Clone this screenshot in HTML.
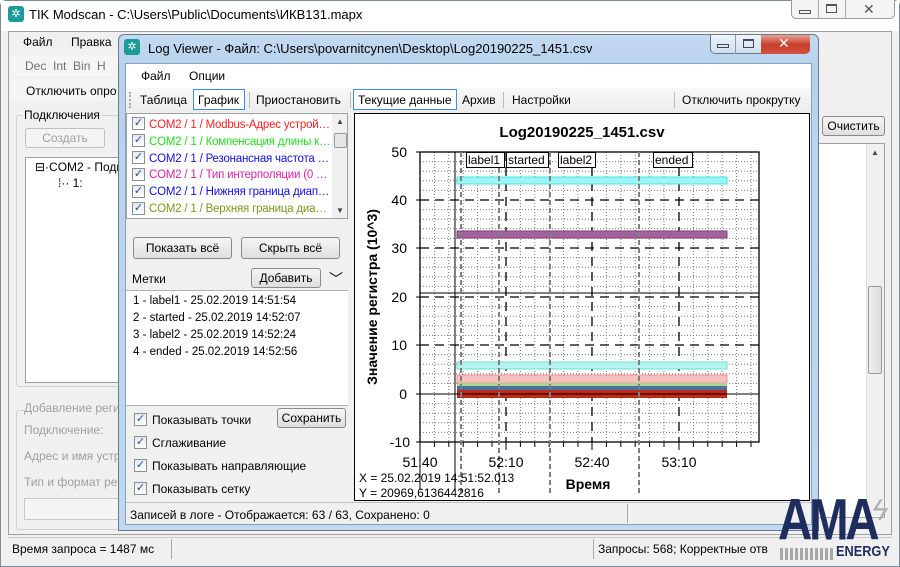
<!DOCTYPE html>
<html><head><meta charset="utf-8"><style>
*{margin:0;padding:0;box-sizing:border-box}
body{width:900px;height:567px;position:relative;overflow:hidden;background:#fff;font-family:"Liberation Sans","DejaVu Sans",sans-serif;font-size:12px;color:#000}
.a{position:absolute;white-space:nowrap}
.btn{position:absolute;border:1px solid #8a8a8a;border-radius:3px;background:linear-gradient(#f6f6f6,#dedede);text-align:center;font-size:12px}
.cb{position:absolute;width:13px;height:13px;border:1px solid #8f8f8f;background:linear-gradient(#e4eaf2,#fff);font-size:11px;line-height:11px;text-align:center;color:#2a4a8a;font-weight:bold}
.gray{color:#a0a0a0}
.ser div{width:182px;overflow:hidden;text-overflow:ellipsis;letter-spacing:-0.2px}
</style></head><body>
<div class="a" style="left:0;top:0;width:900px;height:567px;border:1px solid #7a8a9a;background:#f0f0f0;border-radius:6px 6px 0 0"></div>
<div class="a" style="left:1px;top:1px;width:898px;height:30px;background:#fff"></div>
<div class="a" style="left:8px;top:6px;width:16px;height:16px;background:#1d9a9a;border-radius:3px;color:#fff;font-size:11px;text-align:center;line-height:16px">✲</div>
<div class="a" style="left:29px;top:7px;font-size:13px">TIK Modscan - C:\Users\Public\Documents\ИКВ131.mapx</div>
<div class="a" style="left:791px;top:0;width:104px;height:19px;border:1px solid #9a9a9a;border-top:none;border-radius:0 0 5px 5px;background:#f4f4f4"></div>
<div class="a" style="left:818px;top:0;width:1px;height:19px;background:#aaa"></div>
<div class="a" style="left:845px;top:0;width:1px;height:19px;background:#aaa"></div>
<div class="a" style="left:799px;top:10px;width:12px;height:4px;border:1px solid #555"></div>
<div class="a" style="left:826px;top:4px;width:11px;height:9px;border:1px solid #555;border-top-width:2px"></div>
<div class="a" style="left:863px;top:1px;font-size:14px;color:#555;font-weight:bold">✕</div>
<div class="a" style="left:8px;top:31px;width:884px;height:504px;background:#f0f0f0;border:1px solid #a0a0a0"></div>
<div class="a" style="left:23px;top:35px;font-size:12px">Файл</div>
<div class="a" style="left:71px;top:35px;font-size:12px">Правка</div>
<div class="a" style="left:10px;top:55px;width:110px;height:22px;background:#f5f5f5"></div>
<div class="a gray" style="left:25px;top:59px;color:#707070">Dec &nbsp;Int &nbsp;Bin &nbsp;H</div>
<div class="a" style="left:10px;top:79px;width:110px;height:22px;background:#f5f5f5"></div>
<div class="a" style="left:26px;top:84px">Отключить опро</div>
<div class="a" style="left:16px;top:115px;width:110px;height:272px;border:1px solid #d0d0d0;border-radius:3px"></div>
<div class="a" style="left:22px;top:108px;background:#f0f0f0;padding:0 2px">Подключения</div>
<div class="btn gray" style="left:25px;top:128px;width:80px;height:20px;line-height:18px;background:#f4f4f4;border-color:#c0c0c0">Создать</div>
<div class="a" style="left:25px;top:157px;width:95px;height:226px;background:#fff;border:1px solid #a0a0a0"></div>
<div class="a" style="left:35px;top:160px">⊟·COM2 - Подкл</div>
<div class="a" style="left:58px;top:176px">⁞·· 1:</div>
<div class="a" style="left:16px;top:410px;width:110px;height:120px;border:1px solid #d0d0d0;border-radius:3px"></div>
<div class="a gray" style="left:24px;top:401px;background:#f0f0f0">Добавление регис</div>
<div class="a gray" style="left:24px;top:423px">Подключение:</div>
<div class="a gray" style="left:24px;top:449px">Адрес и имя устро</div>
<div class="a gray" style="left:24px;top:475px">Тип и формат реги</div>
<div class="a" style="left:24px;top:498px;width:100px;height:22px;border:1px solid #c8c8c8;background:#f4f4f4"></div>
<div class="a" style="left:8px;top:537px;width:884px;height:24px;border-top:1px solid #c8c8c8;background:#f0f0f0"></div>
<div class="a" style="left:12px;top:542px;font-size:12px">Время запроса = 1487 мс</div>
<div class="a" style="left:171px;top:539px;width:1px;height:20px;background:#aaa"></div>
<div class="a" style="left:593px;top:539px;width:1px;height:20px;background:#aaa"></div>
<div class="a" style="left:598px;top:542px">Запросы: 568; Корректные отв</div>
<div class="btn" style="left:822px;top:116px;width:63px;height:20px;line-height:18px">Очистить</div>
<div class="a" style="left:815px;top:143px;width:70px;height:375px;background:#fff;border:1px solid #a0a0a0"></div>
<div class="a" style="left:866px;top:144px;width:18px;height:372px;background:#f0f0f0;border-left:1px solid #e0e0e0"></div>
<div class="a" style="left:868px;top:286px;width:14px;height:88px;border:1px solid #999;border-radius:2px;background:linear-gradient(90deg,#eee,#ddd)"></div>
<div class="a" style="left:871px;top:148px;font-size:8px;color:#444">▲</div>
<div class="a" style="left:118px;top:34px;width:701px;height:497px;border:1px solid #6a7a8a;border-radius:6px 6px 0 0;background:linear-gradient(#c4daf0,#b8d2ee 30px,#c0d8f2)"></div>
<div class="a" style="left:124px;top:39px;width:16px;height:16px;background:#1d9a9a;border-radius:3px;color:#fff;font-size:11px;text-align:center;line-height:16px">✲</div>
<div class="a" style="left:148px;top:41px;font-size:13px">Log Viewer - Файл: C:\Users\povarnitcynen\Desktop\Log20190225_1451.csv</div>
<div class="a" style="left:710px;top:35px;width:100px;height:19px;border:1px solid #6a7a8a;border-top:none;border-radius:0 0 5px 5px;background:linear-gradient(#eef4fb,#cfdff0);overflow:hidden"></div>
<div class="a" style="left:761px;top:35px;width:49px;height:19px;background:linear-gradient(#e8a090,#c8402c 50%,#d05040);border-radius:0 0 5px 0"></div>
<div class="a" style="left:735px;top:35px;width:1px;height:19px;background:#8a9aaa"></div>
<div class="a" style="left:717px;top:44px;width:12px;height:4px;border:1px solid #445"></div>
<div class="a" style="left:743px;top:39px;width:11px;height:9px;border:1px solid #445;border-top-width:2px"></div>
<div class="a" style="left:778px;top:35px;font-size:14px;color:#fff;font-weight:bold">✕</div>
<div class="a" style="left:125px;top:63px;width:687px;height:462px;background:#f0f0f0;border:1px solid #8aa0b8"></div>
<div class="a" style="left:126px;top:64px;width:685px;height:24px;background:#fff"></div>
<div class="a" style="left:141px;top:69px">Файл</div>
<div class="a" style="left:189px;top:69px">Опции</div>
<div class="a" style="left:126px;top:88px;width:685px;height:24px;background:linear-gradient(#f8f8f8,#ececec)"></div>
<div class="a" style="left:129px;top:92px;width:2px;height:16px;border-left:2px dotted #aaa"></div>
<div class="a" style="left:140px;top:93px">Таблица</div>
<div class="a" style="left:193px;top:89px;width:52px;height:21px;border:1px solid #3c8fe0;background:#fff"></div>
<div class="a" style="left:198px;top:93px">График</div>
<div class="a" style="left:249px;top:92px;width:1px;height:16px;background:#bbb"></div>
<div class="a" style="left:256px;top:93px">Приостановить</div>
<div class="a" style="left:350px;top:92px;width:1px;height:16px;background:#bbb"></div>
<div class="a" style="left:353px;top:89px;width:104px;height:21px;border:1px solid #3c8fe0;background:#fff"></div>
<div class="a" style="left:358px;top:93px">Текущие данные</div>
<div class="a" style="left:462px;top:93px">Архив</div>
<div class="a" style="left:503px;top:92px;width:1px;height:16px;background:#bbb"></div>
<div class="a" style="left:512px;top:93px">Настройки</div>
<div class="a" style="left:674px;top:92px;width:1px;height:16px;background:#bbb"></div>
<div class="a" style="left:682px;top:93px">Отключить прокрутку</div>
<div class="a" style="left:126px;top:113px;width:222px;height:106px;background:#fff;border:1px solid #a0a0a0;overflow:hidden;font-size:11.5px">
<div class="ser" style="position:absolute;left:22px;top:3px;line-height:16.8px">
<div style="color:#ff2020">COM2 / 1 / Modbus-Адрес устройства</div>
<div style="color:#20e020">COM2 / 1 / Компенсация длины кабеля</div>
<div style="color:#1010e0">COM2 / 1 / Резонансная частота датчика</div>
<div style="color:#e020a0">COM2 / 1 / Тип интерполяции (0 - линейная)</div>
<div style="color:#1010e0">COM2 / 1 / Нижняя граница диапазона</div>
<div style="color:#7a9a20">COM2 / 1 / Верхняя граница диапазона</div>
<div style="color:#ff6a40">COM2 / 1 / Число точек линеаризации</div>
</div>
<div style="position:absolute;left:205px;top:0;width:16px;height:104px;background:#f0f0f0"></div>
<div style="position:absolute;left:207px;top:19px;width:13px;height:15px;border:1px solid #999;border-radius:2px;background:#e6e6e6"></div>
<div style="position:absolute;left:209px;top:3px;font-size:8px;color:#444">▲</div>
<div style="position:absolute;left:209px;top:92px;font-size:8px;color:#444">▼</div>
</div>
<div class="cb" style="left:132px;top:117px">✓</div><div class="cb" style="left:132px;top:134px">✓</div><div class="cb" style="left:132px;top:151px">✓</div><div class="cb" style="left:132px;top:168px">✓</div><div class="cb" style="left:132px;top:185px">✓</div><div class="cb" style="left:132px;top:202px">✓</div>
<div class="btn" style="left:133px;top:237px;width:99px;height:22px;line-height:20px">Показать всё</div>
<div class="btn" style="left:241px;top:237px;width:99px;height:22px;line-height:20px">Скрыть всё</div>
<div class="a" style="left:132px;top:272px">Метки</div>
<div class="btn" style="left:251px;top:268px;width:70px;height:20px;line-height:18px">Добавить</div>
<div class="a" style="left:329px;top:269px;font-size:14px">﹀</div>
<div class="a" style="left:126px;top:290px;width:222px;height:116px;background:#fff;border-top:1px solid #b0b0b0;border-bottom:1px solid #b0b0b0"></div>
<div class="a" style="left:133px;top:293px;line-height:17px;font-size:11.5px">1 - label1 - 25.02.2019 14:51:54<br>2 - started - 25.02.2019 14:52:07<br>3 - label2 - 25.02.2019 14:52:24<br>4 - ended - 25.02.2019 14:52:56</div>
<div class="cb" style="left:134px;top:413px">✓</div><div class="a" style="left:152px;top:413px">Показывать точки</div>
<div class="btn" style="left:277px;top:408px;width:69px;height:20px;line-height:18px">Сохранить</div>
<div class="cb" style="left:134px;top:436px">✓</div><div class="a" style="left:152px;top:436px">Сглаживание</div>
<div class="cb" style="left:134px;top:459px">✓</div><div class="a" style="left:152px;top:459px">Показывать направляющие</div>
<div class="cb" style="left:134px;top:482px">✓</div><div class="a" style="left:152px;top:482px">Показывать сетку</div>
<div class="a" style="left:126px;top:502px;width:685px;height:22px;border-top:1px solid #c0c0c0;background:#f0f0f0"></div>
<div class="a" style="left:130px;top:508px">Записей в логе - Отображается: 63 / 63, Сохранено: 0</div>
<div class="a" style="left:627px;top:504px;width:1px;height:19px;background:#aaa"></div>
<svg class="a" style="left:354px;top:113px" width="457" height="389" viewBox="354 113 457 389" font-family="Liberation Sans,sans-serif">
<rect x="354.5" y="113.5" width="455" height="387" fill="#fff" stroke="#000"/>
<g stroke="#777" stroke-width="1" stroke-dasharray="1,2">
<path d="M434.4 152V442M448.8 152V442M463.2 152V442M477.6 152V442M492 152V442M520.4 152V442M534.8 152V442M549.2 152V442M563.6 152V442M578 152V442M606.4 152V442M620.8 152V442M635.2 152V442M649.6 152V442M664 152V442M693.4 152V442M707.8 152V442M722.2 152V442M736.6 152V442M751 152V442"/>
<path d="M420 161.6H759M420 171.2H759M420 180.8H759M420 190.4H759M420 209.6H759M420 219.2H759M420 228.8H759M420 238.4H759M420 257.6H759M420 267.2H759M420 276.8H759M420 286.4H759M420 306.6H759M420 316.2H759M420 325.8H759M420 335.4H759M420 354.6H759M420 364.2H759M420 373.8H759M420 383.4H759M420 403.6H759M420 413.2H759M420 422.8H759M420 432.4H759"/>
</g>
<g stroke="#000" stroke-width="1.3" stroke-dasharray="9,6">
<path d="M420 200H759M420 248H759M420 297H759M420 345H759M506 152V442M592 152V442M679 152V442"/>
</g>
<path d="M420 293H759M420 394H759M455 152V491" stroke="#000"/>
<rect x="420" y="152" width="339" height="290" fill="none" stroke="#000" stroke-width="1.3"/>
<g stroke="#000"><path d="M416 152H424M416 200H424M416 248H424M416 297H424M416 345H424M416 394H424M416 442H424M420 442V490"/>
<path d="M420 442V447M434.4 442V447M448.8 442V447M463.2 442V447M477.6 442V447M492 442V447M506 442V450M520.4 442V447M534.8 442V447M549.2 442V447M563.6 442V447M578 442V447M592 442V450M606.4 442V447M620.8 442V447M635.2 442V447M649.6 442V447M664 442V447M679 442V450M693.4 442V447M707.8 442V447M722.2 442V447M736.6 442V447M751 442V447"/></g>
<rect x="457" y="177" width="270" height="7" fill="#9ff4f4" stroke="#3ee8ee"/>
<rect x="457" y="231" width="270" height="7" fill="#a0649a" stroke="#8a3a80"/>
<rect x="457" y="362" width="270" height="7" fill="#b8f2ec" stroke="#6ae0da"/>
<rect x="457" y="375" width="270" height="8" fill="#f8c0c0" stroke="#f09090"/>
<rect x="457" y="383" width="270" height="4" fill="#a8d890"/>
<rect x="457" y="386" width="270" height="4" fill="#4a70a0"/>
<rect x="457" y="390" width="270" height="8" fill="#c02818"/>
<path d="M420 394H759" stroke="#000"/>
<g stroke="#808080" stroke-width="2" stroke-dasharray="5,3"><path d="M461 152V495M499 152V495M550 152V495M639 152V495"/></g>
<g fill="#fff" stroke="#000"><rect x="466.5" y="152.5" width="38" height="15"/><rect x="506.5" y="152.5" width="42" height="15"/><rect x="558.5" y="152.5" width="37" height="15"/><rect x="653.5" y="152.5" width="39" height="15"/></g>
<g font-size="12"><text x="468" y="164">label1</text><text x="508" y="164">started</text><text x="560" y="164">label2</text><text x="655" y="164">ended</text></g>
<text x="582" y="137" font-size="15" font-weight="bold" text-anchor="middle">Log20190225_1451.csv</text>
<g font-size="14" text-anchor="end"><text x="407" y="157">50</text><text x="407" y="205">40</text><text x="407" y="253">30</text><text x="407" y="302">20</text><text x="407" y="350">10</text><text x="407" y="399">0</text><text x="410" y="447">-10</text></g>
<g font-size="14" text-anchor="middle"><text x="420" y="467">51:40</text><text x="506" y="467">52:10</text><text x="592" y="467">52:40</text><text x="679" y="467">53:10</text></g>
<text x="588" y="489" font-size="14" font-weight="bold" text-anchor="middle">Время</text>
<text transform="translate(377 297) rotate(-90)" font-size="14" font-weight="bold" text-anchor="middle">Значение регистра (10^3)</text>
<text x="359" y="482" font-size="12">X = 25.02.2019 14:51:52.013</text>
<text x="359" y="497" font-size="12">Y = 20969,6136442816</text>
</svg>
<div class="a" style="left:778px;top:490px;font-size:56px;font-weight:bold;color:#1f2c5e;letter-spacing:-4px;transform:scale(0.85,1.05);transform-origin:left top;line-height:56px">AMA</div>
<div class="a" style="left:872px;top:494px;font-size:30px;color:#b0b0b0;transform:skewX(-15deg)">ϟ</div>
<div class="a" style="left:780px;top:548px;width:55px;height:12px;background:repeating-linear-gradient(90deg,#a8a8a8 0 3px,transparent 3px 5px)"></div>
<div class="a" style="left:836px;top:543px;font-size:15px;font-weight:bold;color:#1f2c5e;line-height:18px;transform:scaleX(0.85);transform-origin:left">ENERGY</div>
</body></html>
